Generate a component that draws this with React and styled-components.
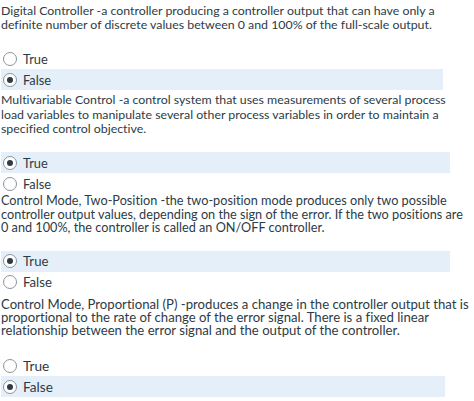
import styled, { createGlobalStyle } from "styled-components";

const GlobalStyle = createGlobalStyle`
  body {
    margin: 0;
    background: #fff;
    font-family: Lato, "Open Sans", sans-serif;
    color: #2d3b45;
  }
`;

const questions = [
  {
    text: "Digital Controller -a controller producing a controller output that can have only a definite number of discrete values between 0 and 100% of the full-scale output.",
    answer: "False",
    size: 12.35,
    lh: 13.5,
    top: 4,
    gap: 17,
    width: 455,
    rowWidth: 440,
  },
  {
    text: "Multivariable Control -a control system that uses measurements of several process load variables to manipulate several other process variables in order to maintain a specified control objective.",
    answer: "True",
    size: 12.35,
    lh: 14.5,
    top: 3,
    gap: 15.5,
    width: 452,
    rowWidth: 447,
  },
  {
    text: "Control Mode, Two-Position -the two-position mode produces only two possible controller output values, depending on the sign of the error. If the two positions are 0 and 100%, the controller is called an ON/OFF controller.",
    answer: "True",
    size: 12.7,
    lh: 13.5,
    top: 0,
    gap: 16,
    width: 470,
    rowWidth: 447,
  },
  {
    text: "Control Mode, Proportional (P) -produces a change in the controller output that is proportional to the rate of change of the error signal. There is a fixed linear relationship between the error signal and the output of the controller.",
    answer: "False",
    size: 13.15,
    lh: 13,
    top: 5,
    gap: 18.5,
    width: 470,
    rowWidth: 442,
  },
];

const App = () => (
  <Page>
    <GlobalStyle />
    {questions.map((q, i) => (
      <Question key={i} $top={q.top}>
        <Prompt $size={q.size} $lh={q.lh} $gap={q.gap} $width={q.width}>
          {q.text}
        </Prompt>
        {["True", "False"].map((opt) => (
          <Option
            key={opt}
            $selected={q.answer === opt}
            $width={q.rowWidth}
            $size={q.size}
          >
            <Radio $checked={q.answer === opt} />
            <span>{opt}</span>
          </Option>
        ))}
      </Question>
    ))}
  </Page>
);

const Page = styled.div`
  width: 472px;
  padding-left: 1px;
`;

const Question = styled.div`
  display: flex;
  flex-direction: column;
  padding-top: ${(p) => p.$top}px;
`;

const Prompt = styled.p`
  margin: 0 0 ${(p) => p.$gap}px;
  max-width: ${(p) => p.$width}px;
  font-size: ${(p) => p.$size}px;
  line-height: ${(p) => p.$lh}px;
  font-variant-ligatures: none;
`;

const Option = styled.label`
  display: flex;
  align-items: center;
  gap: 6px;
  height: 21px;
  width: ${(p) => p.$width}px;
  padding-left: 2px;
  font-size: ${(p) => p.$size + 0.5}px;
  background: ${(p) => (p.$selected ? "#e5eff9" : "transparent")};
`;

const Radio = styled.span`
  box-sizing: border-box;
  width: 14px;
  height: 14px;
  border-radius: 50%;
  border: 1px solid #8a949b;
  background: #fff;
  display: flex;
  align-items: center;
  justify-content: center;

  &::after {
    content: "";
    display: ${(p) => (p.$checked ? "block" : "none")};
    width: 6px;
    height: 6px;
    border-radius: 50%;
    background: #2d3b45;
  }
`;

export default App;
